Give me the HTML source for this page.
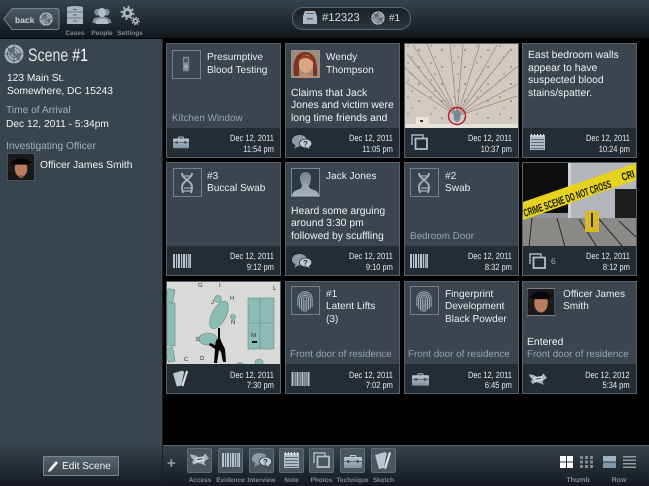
<!DOCTYPE html>
<html><head><meta charset="utf-8"><style>
html,body{margin:0;padding:0;background:#000}
#p{position:relative;width:649px;height:486px;overflow:hidden;background:#000;font-family:"Liberation Sans",sans-serif;color:#f0f2f3;text-rendering:geometricPrecision}
#p div,#p svg{position:absolute}
.t{white-space:nowrap}
.card{width:115px;height:115px;background:#3a454f;box-shadow:inset 0 0 0 1px #56626c}
.r2{height:114px}
.r3{height:113px}
.foot{left:1px;right:1px;bottom:1px;height:29px;background:#252d34}
.title{font-size:10.100px;line-height:12.700px;color:#e8ecee;white-space:nowrap;left:41px;top:9px}
.r2 .title{top:8.500px}
.r3 .title{top:7.500px}
.body{font-size:10.400px;line-height:12.500px;color:#eef0f1;left:6px;top:44.500px;white-space:nowrap}
.loc{font-size:9.850px;color:#98a5ae;left:6px;bottom:34px;white-space:nowrap}
.date{right:7px;top:90px;text-align:right;font-size:9px;line-height:10.700px;color:#e6e9eb;white-space:nowrap;transform:scaleX(.83);transform-origin:100% 0}
.r2 .date{top:89px}
.r3 .date{top:88.500px}
.ib{left:6px;top:6px;width:27px;height:27px;border:1px solid #74808a}
.lab{font-size:6.500px;font-weight:bold;color:#7f8b94;white-space:nowrap;text-align:center}
.tb{width:25px;height:25px;top:448px;background:#4a555e;border:1px solid #5f6b74;border-radius:2px;box-sizing:border-box}
</style></head><body><div id="p">

<svg width="0" height="0" style="left:0;top:0">
<defs>
<linearGradient id="ic" x1="0" y1="0" x2="0" y2="1"><stop offset="0" stop-color="#c4d2dc"/><stop offset="1" stop-color="#8093a1"/></linearGradient>
<pattern id="spk" width="23" height="17" patternUnits="userSpaceOnUse"><circle cx="3" cy="2" r=".8" fill="#7a5a4e"/><circle cx="14" cy="6" r="1" fill="#85675a"/><circle cx="7" cy="13" r=".7" fill="#7a5a4e"/></pattern>
<symbol id="case" viewBox="0 0 18 14"><path fill="url(#ic)" d="M6 3V1h6v2h5a1 1 0 0 1 1 1v9a1 1 0 0 1-1 1H1a1 1 0 0 1-1-1V4a1 1 0 0 1 1-1zM7 3h4V2H7z"/><path fill="#4d5963" d="M0 7h18v.8H0zM3 6h2.500v3H3zM12.500 6h2.500v3h-2.500z"/></symbol>
<symbol id="bar" viewBox="0 0 18 14"><path fill="#b5c3cd" d="M0 0h2v14H0zM3 0h1.200v14H3zM5 0h2v14H5zM8 0h1.200v14H8zM10 0h2v14h-2zM12.800 0h1.200v14h-1.200zM14.800 0h1v14h-1zM16.300 0h1.700v14h-1.700z"/></symbol>
<symbol id="chat" viewBox="0 0 20 15"><path fill="#8c9ca8" d="M7.500 0c4.500 0 7.500 2.500 7.500 5.800s-3 5.700-7.500 5.700H6L2.500 14l1-3.700C1.300 9.200 0 7.700 0 5.800 0 2.500 3 0 7.500 0z"/><path fill="#bccad4" stroke="#252d34" stroke-width=".7" d="M13.500 4c3.500 0 6.200 2 6.200 4.500 0 1.700-1 3-2.500 3.700l.8 2.600-3.200-2h-1.300c-3.500 0-6-1.900-6-4.300C7.500 6 10 4 13.500 4z"/><text x="13.500" y="11.500" font-size="8" font-weight="bold" fill="#2c353c" text-anchor="middle" font-family="Liberation Sans">?</text></symbol>
<symbol id="photos" viewBox="0 0 17 16"><path fill="none" stroke="#a9b7c1" stroke-width="1.400" d="M1 11V1h11v3"/><path fill="none" stroke="#b3c0ca" stroke-width="1.800" d="M4.500 4.500h11.500v10.500H4.500z"/></symbol>
<symbol id="note" viewBox="0 0 15 16"><path fill="#aebcc6" d="M0 1h15v15H0z"/><path fill="#4a555e" d="M1 5h13v.8H1zM1 8h13v.8H1zM1 11h13v.8H1zM1 14h13v.8H1z"/><path fill="#e0e5e9" d="M1 0h1v3H1zM4 0h1v3H4zM7 0h1v3H7zM10 0h1v3h-1zM13 0h1v3h-1z"/></symbol>
<symbol id="sketch" viewBox="0 0 17 17"><path fill="#b8c6d0" d="M0 3l10-3 2 2-3 14-5 1z"/><path fill="#39444e" d="M11 5l1-3 1 1-3 13-1-.500z"/><path fill="#dfe5ea" d="M14 0l2 1-5 16-2-1z"/></symbol>
<symbol id="access" viewBox="0 0 20 14"><path fill="#aab8c2" d="M0 1l5 1 4 2 5-1 2-3 2 3 2 2-4 3-1 2 2 3-5-2-4-1-4 2-2-3 2-2-3-3z"/><path fill="#d6dee3" d="M5 5l9-1.500 1.500 4-9 2z"/><path fill="#4a555e" d="M7 6l6-1 .5 1.200-6 1z"/></symbol>
<symbol id="dna" viewBox="0 0 14 20"><path fill="none" stroke="#a0aeb8" stroke-width="2" d="M2 0c0 6 10 8 10 14 0 2-.5 4-1 6M12 0C12 6 2 8 2 14c0 2 .5 4 1 6"/><path stroke="#a0aeb8" stroke-width="1.300" d="M3 3h8M5 6h4M4 15h7M3 18h8"/></symbol>
<symbol id="fp" viewBox="0 0 18 25"><g fill="none" stroke="#aab8c2" stroke-width="1"><path d="M1 17V9C1 4 5 1 9 1s8 3 8 8v9"/><path d="M3 20V9c0-3 3-6 6-6s6 3 6 6v11"/><path d="M5 22V9c0-2 2-4 4-4s4 2 4 4v12"/><path d="M7 23V9c0-1 1-2 2-2s2 1 2 2v14"/><path d="M9 10v14"/></g></symbol>
<symbol id="globe" viewBox="0 0 20 20"><circle cx="10" cy="10" r="9.500" fill="#a9b5bd"/><g fill="none" stroke="#4a555e" stroke-width=".8"><circle cx="10" cy="10" r="6.500"/><circle cx="10" cy="10" r="3.500"/><path d="M10 0v20M0 10h20M3 3l14 14"/></g><path fill="#5c6770" d="M4 5l5-2 2 3-3 3-3-1zM12 11l4-1 0 4-3 3z"/></symbol>
</defs></svg>

<!-- top bar -->
<div style="left:0;top:0;width:649px;height:38px;background:linear-gradient(#36424b,#11171c)"></div>
<div style="left:0;top:38px;width:649px;height:1px;background:#05080a"></div>

<!-- back button -->
<svg style="left:3px;top:8px" width="57" height="22" viewBox="0 0 57 22"><defs><linearGradient id="bk" x1="0" y1="0" x2="0" y2="1"><stop offset="0" stop-color="#4d5964"/><stop offset="1" stop-color="#2f3941"/></linearGradient></defs><path d="M.8 11L9 .5h45a2 2 0 0 1 2 2v17a2 2 0 0 1-2 2H9z" fill="url(#bk)" stroke="#76838c"/></svg>
<div class="t" style="left:15px;top:15px;font-size:8.500px;font-weight:bold;color:#c9d1d6">back</div>
<svg style="left:39px;top:12px" width="14" height="14"><use href="#globe" width="14" height="14"/></svg>

<!-- Cases -->
<svg style="left:67px;top:6px" width="16" height="18" viewBox="0 0 16 18"><path fill="#a7b6c1" d="M0 1q8-2 16 0v17H0z"/><path stroke="#5c6973" stroke-width=".8" d="M0 6h16M0 12h16"/><path fill="#5c6973" d="M6 3h4v1H6zM6 8.500h4v1H6zM6 14.500h4v1H6z"/></svg>
<div class="lab" style="left:64px;top:30px;width:22px">Cases</div>
<!-- People -->
<svg style="left:92px;top:7px" width="20" height="17" viewBox="0 0 20 18"><path fill="#7f909d" d="M5 2a3 3 0 0 1 3 3c0 2-1 4-3 4S2 7 2 5a3 3 0 0 1 3-3zM15 2a3 3 0 0 1 3 3c0 2-1 4-3 4s-3-2-3-4a3 3 0 0 1 3-3zM0 17c0-5 3-6 5-6s10-1 10 0 5 1 5 6z"/><path fill="#aebdc8" d="M10 1a4 4 0 0 1 4 4c0 3-1 6-4 6S6 8 6 5a4 4 0 0 1 4-4zM3 18c0-5 4-6 7-6s7 1 7 6z"/></svg>
<div class="lab" style="left:89px;top:30px;width:26px">People</div>
<!-- Settings -->
<svg style="left:120px;top:6px" width="20" height="20" viewBox="0 0 20 20"><g fill="none" stroke="#a9b7c1"><circle cx="7.500" cy="7" r="3.500" stroke-width="3"/><circle cx="7.500" cy="7" r="6" stroke-width="2" stroke-dasharray="2 2.700"/><circle cx="15.500" cy="15" r="2" stroke-width="1.800"/><circle cx="15.500" cy="15" r="3.600" stroke-width="1.300" stroke-dasharray="1.500 1.300"/></g></svg>
<div class="lab" style="left:115px;top:30px;width:30px">Settings</div>

<!-- pill -->
<div style="left:292px;top:7px;width:117px;height:21px;border-radius:11px;background:linear-gradient(#1a2127,#2d373f);border:1px solid #5b6770"></div>
<svg style="left:303px;top:11px" width="14" height="13" viewBox="0 0 14 13"><path fill="#a9b8c3" d="M2 0h10l2 5v8H0V5z"/><path fill="#5c6973" d="M3 2h8v1H3zM4 7h6v1.500H4z"/></svg>
<div class="t" style="left:322px;top:12px;font-size:11.300px;color:#d7dde1">#12323</div>
<svg style="left:371px;top:11px" width="14" height="14"><use href="#globe" width="14" height="14"/></svg>
<div class="t" style="left:389px;top:13px;font-size:10px;color:#d7dde1">#1</div>

<!-- sidebar -->
<div style="left:0;top:39px;width:162px;height:407px;background:#38444e"></div>
<svg style="left:4px;top:44px" width="20" height="20"><use href="#globe" width="20" height="20"/></svg>
<div class="t" style="left:28px;top:45px;font-size:18px;transform:scaleX(.79);transform-origin:0 0;color:#dfe4e7">Scene <span style="color:#fff">#1</span></div>
<div class="t" style="left:7px;top:73px;font-size:10.200px;line-height:12.700px;color:#f1f3f4">123 Main St.<br>Somewhere, DC 15243</div>
<div class="t" style="left:6px;top:104.500px;font-size:10.200px;color:#a3afb8">Time of Arrival</div>
<div class="t" style="left:6px;top:118.500px;font-size:10.200px;color:#f1f3f4">Dec 12, 2011 - 5:34pm</div>
<div class="t" style="left:6px;top:140.500px;font-size:10.200px;color:#a3afb8">Investigating Officer</div>
<svg style="left:7px;top:153px" width="28" height="28" viewBox="0 0 29 29"><rect width="29" height="29" fill="#1b1a1a" stroke="#7a8791"/><rect x="1" y="20" width="27" height="8" fill="#15171a"/><ellipse cx="14.500" cy="16" rx="6.500" ry="9" fill="#b77d5e"/><path d="M3 10q11-9 23 0l-4 2H7z" fill="#05070a"/><path d="M12 23h5l-1 3h-3z" fill="#8a5a44"/></svg>
<div class="t" style="left:40px;top:159.500px;font-size:10.300px;color:#eef0f1">Officer James Smith</div>

<!-- R1C1 -->
<div class="card" style="left:166px;top:43px">
 <div class="ib" style="top:7px"></div>
 <svg style="left:16px;top:12px" width="8" height="18" viewBox="0 0 10 18"><rect x="1" width="8" height="18" rx="1.500" fill="#7d8a94"/><rect x="2.500" y="2" width="5" height="5" fill="#4a555e"/><rect x="3" y="10" width="4" height="5" fill="#a0acb5"/></svg>
 <div class="title">Presumptive<br>Blood Testing</div>
 <div class="loc">Kitchen Window</div>
 <div class="foot"></div>
 <svg style="left:7px;top:92px" width="16" height="14"><use href="#case"/></svg>
 <div class="date">Dec 12, 2011<br>11:54 pm</div>
</div>

<!-- R1C2 -->
<div class="card" style="left:285px;top:43px">
 <svg style="left:6px;top:7px" width="29" height="28" viewBox="0 0 29 28"><rect width="29" height="28" fill="#9e8b7b" stroke="#8b97a0"/><path d="M3 26C1 14 4 2 14 2s13 10 12 24H22V12H8v14z" fill="#7d3620"/><ellipse cx="15" cy="14" rx="7" ry="9" fill="#dca584"/><path d="M7 12q7-8 15 0l-2-5-6-2-6 3z" fill="#8b3d22"/><path d="M6 28q8-8 17 0z" fill="#c98e70"/></svg>
 <div class="title">Wendy<br>Thompson</div>
 <div class="body">Claims that Jack<br>Jones and victim were<br>long time friends and</div>
 <div class="foot"></div>
 <svg style="left:7px;top:92px" width="20" height="15"><use href="#chat"/></svg>
 <div class="date">Dec 12, 2011<br>11:05 pm</div>
</div>

<!-- R1C3 -->
<div class="card" style="left:404px;top:43px">
 <svg style="left:1px;top:1px" width="113" height="84" viewBox="0 0 113 84">
  <rect width="113" height="84" fill="#d2cac1"/>
  <rect width="113" height="80" fill="url(#spk)" opacity=".7"/>
  <g stroke="#94857c" stroke-width=".7"><path d="M52 72L2 10M52 72L8 1M52 72L22 0M52 72L45 0M52 72L58 0M52 72L75 0M52 72L92 1M52 72L106 5M52 72L113 22M52 72L113 40M52 72L0 38M52 72L0 24M52 72L112 52"/></g>
  <rect y="80" width="113" height="4" fill="#e4e0da"/>
  <rect x="11" y="73" width="13" height="8" fill="#e8e4de"/><rect x="15" y="76" width="3" height="2" fill="#333"/>
  <ellipse cx="52" cy="72" rx="3.500" ry="6" fill="#6f8a9b"/>
  <circle cx="52" cy="72" r="8.500" fill="none" stroke="#c0182f" stroke-width="1.400"/>
 </svg>
 <div class="foot"></div>
 <svg style="left:7px;top:91px" width="17" height="16"><use href="#photos"/></svg>
 <div class="date">Dec 12, 2011<br>10:37 pm</div>
</div>

<!-- R1C4 -->
<div class="card" style="left:522px;top:43px">
 <div class="body" style="top:7px">East bedroom walls<br>appear to have<br>suspected blood<br>stains/spatter.</div>
 <div class="foot"></div>
 <svg style="left:8px;top:91px" width="15" height="16"><use href="#note"/></svg>
 <div class="date">Dec 12, 2011<br>10:24 pm</div>
</div>

<!-- R2C1 -->
<div class="card r2" style="left:166px;top:162px">
 <div class="ib" style="left:7px"></div>
 <svg style="left:14px;top:11px" width="14" height="20"><use href="#dna"/></svg>
 <div class="title">#3<br>Buccal Swab</div>
 <div class="foot"></div>
 <svg style="left:7px;top:92px" width="18" height="14"><use href="#bar"/></svg>
 <div class="date">Dec 12, 2011<br>9:12 pm</div>
</div>

<!-- R2C2 -->
<div class="card r2" style="left:285px;top:162px">
 <svg style="left:6px;top:6px" width="29" height="29" viewBox="0 0 29 29"><defs><linearGradient id="pg" x1="0" y1="0" x2="0" y2="1"><stop offset="0" stop-color="#75848f"/><stop offset="1" stop-color="#a6b6c2"/></linearGradient></defs><rect x=".5" y=".5" width="28" height="28" fill="#2f3942" stroke="#78848e"/><path fill="url(#pg)" d="M14.500 4c4 0 5.500 3 5.500 6 0 4-2 6-2 8 0 2 2 3 5 4 3 1 5 3 5 6H1c0-3 2-5 5-6s5-2 5-4c0-2-2-4-2-8 0-3 1.500-6 5.500-6z"/></svg>
 <div class="title">Jack Jones</div>
 <div class="body" style="top:43.500px">Heard some arguing<br>around 3:30 pm<br>followed by scuffling</div>
 <div class="foot"></div>
 <svg style="left:7px;top:92px" width="20" height="15"><use href="#chat"/></svg>
 <div class="date">Dec 12, 2011<br>9:10 pm</div>
</div>

<!-- R2C3 -->
<div class="card r2" style="left:404px;top:162px">
 <div class="ib"></div>
 <svg style="left:13px;top:11px" width="14" height="20"><use href="#dna"/></svg>
 <div class="title">#2<br>Swab</div>
 <div class="loc">Bedroom Door</div>
 <div class="foot"></div>
 <svg style="left:6px;top:92px" width="18" height="14"><use href="#bar"/></svg>
 <div class="date">Dec 12, 2011<br>8:32 pm</div>
</div>

<!-- R2C4 -->
<div class="card r2" style="left:522px;top:162px">
 <svg style="left:1px;top:1px" width="113" height="84" viewBox="0 0 113 84">
  <rect width="113" height="84" fill="#8f949b"/>
  <rect width="45" height="50" fill="#0e0e0e"/>
  <rect x="45" width="68" height="55" fill="#b3b6ba"/>
  <rect x="45" y="0" width="3" height="56" fill="#d0d2d5"/>
  <rect x="92" y="26" width="21" height="36" fill="#1d1d1e"/>
  <rect y="55" width="113" height="29" fill="#8b8985"/>
  <g stroke="#2c2a2a" stroke-width="1"><path d="M9 55L6 84M34 55L42 84M56 56L74 84M76 56L100 84M96 58L113 74"/></g>
  <path d="M0 39L113 0v17L0 57z" fill="#e6d21f"/>
  <text x="2" y="54" font-size="11" font-weight="bold" fill="#1a1a10" transform="rotate(-19 2 54)" font-family="Liberation Sans" textLength="92" lengthAdjust="spacingAndGlyphs">CRIME SCENE DO NOT CROSS</text>
  <text x="100" y="18" font-size="11" font-weight="bold" fill="#1a1a10" transform="rotate(-19 100 18)" font-family="Liberation Sans" textLength="13" lengthAdjust="spacingAndGlyphs">CRI</text>
  <rect x="62" y="48" width="14" height="21" fill="#d9b92a"/><rect x="68" y="50" width="2" height="14" fill="#3a3210"/>
 </svg>
 <div class="foot"></div>
 <svg style="left:7px;top:91px" width="17" height="16"><use href="#photos"/></svg>
 <div class="t" style="left:29px;top:94px;font-size:8.500px;color:#a8b3bb">6</div>
 <div class="date">Dec 12, 2011<br>8:12 pm</div>
</div>

<!-- R3C1 -->
<div class="card r3" style="left:166px;top:281px">
 <svg style="left:1px;top:1px" width="113" height="84" viewBox="0 0 113 84">
  <rect width="113" height="84" fill="#d9dad8"/>
  <g fill="#8dbcb4" stroke="#5f8e88" stroke-width=".6">
   <rect x="81" y="16" width="26" height="51"/>
   <ellipse cx="52" cy="33" rx="7" ry="15" transform="rotate(28 52 33)"/>
   <ellipse cx="41" cy="57" rx="9" ry="6"/>
   <circle cx="51" cy="17" r="3.500"/>
   <circle cx="66" cy="35" r="2.500"/>
   <circle cx="92" cy="81" r="4"/>
   <rect x="0" y="21" width="8" height="43"/>
   <rect x="0" y="7" width="7" height="13" transform="rotate(10 3 13)"/>
   <rect x="0" y="66" width="7" height="14" transform="rotate(-10 3 73)"/>
   <path d="M68 84q5-7 10 0z"/>
  </g>
  <path stroke="#5f8e88" stroke-width=".6" fill="none" d="M93 16v51M81 41h26"/>
  <path d="M51 46h2v10l2 5 3 6 1 13h-3l-2-10-2-2-2 13h-3l1-14-6-4 1-2 5 2 1-4 2-3z" fill="#060606"/>
  <rect x="85" y="59" width="5" height="2" fill="#111"/>
  <g font-family="Liberation Sans" font-size="6" fill="#333"><text x="31" y="5">G</text><text x="52" y="5">I</text><text x="106" y="8">L</text><text x="63" y="18">H</text><text x="44" y="22">J</text><text x="64" y="42">N</text><text x="29" y="59">E</text><text x="33" y="78">D</text><text x="17" y="79">C</text><text x="84" y="55">M</text></g>
 </svg>
 <div class="foot"></div>
 <svg style="left:7px;top:89px" width="16" height="17"><use href="#sketch"/></svg>
 <div class="date">Dec 12, 2011<br>7:30 pm</div>
</div>

<!-- R3C2 -->
<div class="card r3" style="left:285px;top:281px">
 <div class="ib" style="top:5px"></div>
 <svg style="left:12px;top:9px" width="16" height="24"><use href="#fp"/></svg>
 <div class="title">#1<br>Latent Lifts<br>(3)</div>
 <div class="loc" style="left:5px">Front door of residence</div>
 <div class="foot"></div>
 <svg style="left:6px;top:91px" width="19" height="14"><use href="#bar"/></svg>
 <div class="date">Dec 12, 2011<br>7:02 pm</div>
</div>

<!-- R3C3 -->
<div class="card r3" style="left:404px;top:281px">
 <div class="ib" style="top:5px"></div>
 <svg style="left:12px;top:9px" width="16" height="24"><use href="#fp"/></svg>
 <div class="title">Fingerprint<br>Development<br>Black Powder</div>
 <div class="loc" style="left:4px">Front door of residence</div>
 <div class="foot"></div>
 <svg style="left:8px;top:91px" width="17" height="14"><use href="#case"/></svg>
 <div class="date">Dec 12, 2011<br>6:45 pm</div>
</div>

<!-- R3C4 -->
<div class="card r3" style="left:522px;top:281px">
 <svg style="left:5px;top:7px" width="28" height="28" viewBox="0 0 29 28"><rect width="29" height="28" fill="#1b1a1a" stroke="#7a8791"/><ellipse cx="14.500" cy="15" rx="7" ry="10" fill="#b77d5e"/><path d="M3 8q11-9 23 0l-4 3H7z" fill="#05070a"/><rect x="1" y="25" width="27" height="2" fill="#15171a"/></svg>
 <div class="title">Officer James<br>Smith</div>
 <div class="body" style="top:55.500px;left:5px">Entered</div>
 <div class="loc" style="left:5px">Front door of residence</div>
 <div class="foot"></div>
 <svg style="left:7px;top:92px" width="18" height="13"><use href="#access"/></svg>
 <div class="date">Dec 12, 2012<br>5:34 pm</div>
</div>

<!-- bottom bar -->
<div style="left:0;top:445px;width:162px;height:41px;background:linear-gradient(#38434c,#141a1f)"></div>
<div style="left:162px;top:445px;width:487px;height:41px;background:linear-gradient(#36414a,#141a1f);border-top:1px solid #59646d;box-sizing:border-box"></div>
<div style="left:162px;top:39px;width:1px;height:447px;background:#1a2025"></div>

<div style="left:43px;top:456px;width:76px;height:20px;background:linear-gradient(#56626c,#3b464f);border:1px solid #7b8790;box-sizing:border-box;border-radius:1px"></div>
<svg style="left:48px;top:460px" width="11" height="12" viewBox="0 0 11 12"><path d="M1 9L8 1l2 2-7 8-3 1z" fill="#eef1f3"/></svg>
<div class="t" style="left:62px;top:461px;font-size:10.100px;color:#eef1f3">Edit Scene</div>

<div class="t" style="left:167px;top:455px;font-size:15px;font-weight:bold;color:#8f9ba4">+</div>

<div class="tb" style="left:187px"></div><svg style="left:190px;top:453px" width="19" height="14"><use href="#access"/></svg><div class="lab" style="left:185px;top:477px;width:30px">Access</div>
<div class="tb" style="left:218px"></div><svg style="left:222px;top:453px" width="18" height="14"><use href="#bar"/></svg><div class="lab" style="left:216px;top:477px;width:29px">Evidence</div>
<div class="tb" style="left:249px"></div><svg style="left:252px;top:453px" width="20" height="15"><use href="#chat"/></svg><div class="lab" style="left:247px;top:477px;width:29px">Interview</div>
<div class="tb" style="left:279px"></div><svg style="left:284px;top:452px" width="15" height="16"><use href="#note"/></svg><div class="lab" style="left:279px;top:477px;width:25px">Note</div>
<div class="tb" style="left:309px"></div><svg style="left:313px;top:452px" width="17" height="16"><use href="#photos"/></svg><div class="lab" style="left:309px;top:477px;width:25px">Photos</div>
<div class="tb" style="left:340px"></div><svg style="left:344px;top:454px" width="18" height="14"><use href="#case"/></svg><div class="lab" style="left:336px;top:477px;width:33px">Technique</div>
<div class="tb" style="left:371px"></div><svg style="left:375px;top:452px" width="17" height="17"><use href="#sketch"/></svg><div class="lab" style="left:371px;top:477px;width:25px">Sketch</div>

<!-- view toggles -->
<svg style="left:560px;top:456px" width="13" height="12"><path fill="#fff" d="M0 0h6v5.500H0zM7 0h6v5.500H7zM0 6.500h6V12H0zM7 6.500h6V12H7z"/></svg>
<svg style="left:580px;top:456px" width="13" height="12"><g fill="#7f8c96"><path d="M0 0h3v3H0zM5 0h3v3H5zM10 0h3v3h-3zM0 4.500h3v3H0zM5 4.500h3v3H5zM10 4.500h3v3h-3zM0 9h3v3H0zM5 9h3v3H5zM10 9h3v3h-3z"/></g></svg>
<svg style="left:603px;top:456px" width="13" height="12"><path fill="#9eb2c2" d="M0 0h13v5.500H0z"/><path fill="#8196a6" d="M0 6.500h13V12H0z"/></svg>
<svg style="left:623px;top:456px" width="13" height="12"><path fill="#8f9ba5" d="M0 0h13v1.500H0zM0 3.500h13V5H0zM0 7h13v1.500H0zM0 10.500h13V12H0z"/></svg>
<div class="lab" style="left:566px;top:477px;width:24px;font-size:7px">Thumb</div>
<div class="lab" style="left:610px;top:477px;width:18px;font-size:7px">Row</div>

</div></body></html>
